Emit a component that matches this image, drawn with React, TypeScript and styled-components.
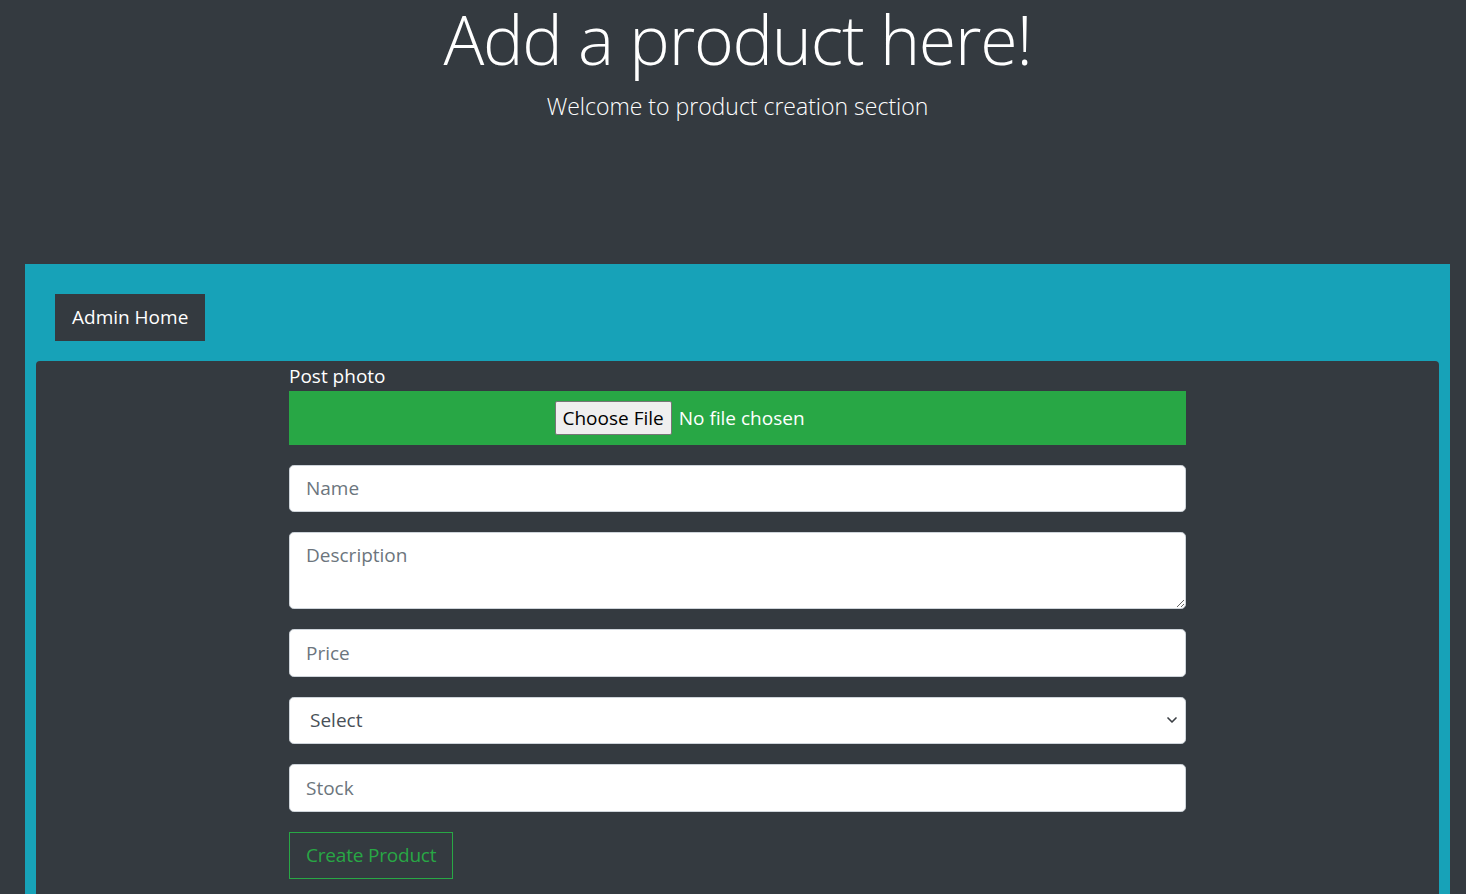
import React from "react";
import styled, { createGlobalStyle } from "styled-components";
import { ChevronDown } from "lucide-react";

const Global = createGlobalStyle`
  html, body { margin: 0; padding: 0; }
  body {
    background: #343a40;
    font-family: "Open Sans", "Noto Sans", sans-serif;
    color: #fff;
    overflow: hidden;
  }
  * { box-sizing: border-box; }
`;

const Header = styled.header`
  text-align: center;
  padding: 5px 0 140px 9px;
`;

const Title = styled.h1`
  margin: 0;
  font-size: 68px;
  font-weight: 300;
  line-height: 1;
  letter-spacing: -1.2px;
  color: #fff;
`;

const Subtitle = styled.p`
  margin: 16px 0 0;
  font-size: 23px;
  font-weight: 300;
  line-height: 1.5;
`;

const InfoSection = styled.section`
  background: #17a2b8;
  margin: 0 16px 0 25px;
  padding: 30px 11px 0;
`;

const ButtonRow = styled.div`
  padding: 0 19px 20px;
`;

const DarkButton = styled.button`
  display: block;
  font-family: inherit;
  font-size: 19px;
  line-height: 29px;
  padding: 8px 16px;
  background: #343a40;
  color: #fff;
  border: 1px solid #343a40;
  border-radius: 0;
`;

const Panel = styled.div`
  background: #343a40;
  border-radius: 4px 4px 0 0;
  padding: 0 0 60px;
`;

const Form = styled.form`
  width: 897px;
  margin: 0 auto;
  display: flex;
  flex-direction: column;
  gap: 20px;
`;

const Group = styled.div`
  display: flex;
  flex-direction: column;
`;

const Label = styled.label`
  font-size: 19px;
  line-height: 30px;
  color: #fff;
`;

const FileBox = styled.div`
  background: #28a745;
  height: 54px;
  display: flex;
  align-items: center;
  justify-content: center;
`;

const FileInner = styled.div`
  width: 366px;
  display: flex;
  align-items: center;
  gap: 7px;
`;

const FileButton = styled.span`
  display: inline-flex;
  align-items: center;
  height: 34px;
  padding: 0 7px;
  background: #efefef;
  border: 1px solid #767676;
  border-radius: 2px;
  color: #000;
  font-size: 19px;
`;

const FileText = styled.span`
  font-size: 19px;
  color: #fff;
`;

const fieldCss = `
  width: 100%;
  font-family: inherit;
  font-size: 19px;
  line-height: 1.5;
  padding: 8px 16px;
  color: #495057;
  background: #fff;
  border: 1px solid #ced4da;
  border-radius: 4.8px;
  outline: none;
  &::placeholder { color: #6c757d; opacity: 1; }
`;

const Input = styled.input`
  ${fieldCss}
  height: 47.5px;
`;

const TextArea = styled.textarea`
  ${fieldCss}
  height: 77px;
  display: block;
`;

const SelectWrap = styled.div`
  position: relative;
`;

const Select = styled.select`
  ${fieldCss}
  height: 47.5px;
  padding-left: 20px;
  appearance: none;
  -webkit-appearance: none;
`;

const SelectIcon = styled.span`
  position: absolute;
  right: 6px;
  top: 50%;
  transform: translateY(-50%);
  display: flex;
  color: #3b3f44;
  pointer-events: none;
`;

const SubmitRow = styled.div``;

const OutlineButton = styled.button`
  font-family: inherit;
  font-size: 19px;
  letter-spacing: -0.2px;
  line-height: 29px;
  padding: 8px 16px;
  background: transparent;
  color: #28a745;
  border: 1px solid #28a745;
  border-radius: 0;
`;

export default function App() {
  return (
    <>
      <Global />
      <Header>
        <Title>Add a product here!</Title>
        <Subtitle>Welcome to product creation section</Subtitle>
      </Header>
      <InfoSection>
        <ButtonRow>
          <DarkButton type="button">Admin Home</DarkButton>
        </ButtonRow>
        <Panel>
          <Form onSubmit={(e) => e.preventDefault()}>
            <Group>
              <Label>Post photo</Label>
              <FileBox>
                <FileInner>
                  <FileButton>Choose File</FileButton>
                  <FileText>No file chosen</FileText>
                </FileInner>
              </FileBox>
            </Group>
            <Input placeholder="Name" />
            <TextArea placeholder="Description" rows={2} />
            <Input placeholder="Price" />
            <SelectWrap>
              <Select defaultValue="">
                <option value="">Select</option>
              </Select>
              <SelectIcon>
                <ChevronDown size={16} strokeWidth={2.5} />
              </SelectIcon>
            </SelectWrap>
            <Input placeholder="Stock" />
            <SubmitRow>
              <OutlineButton type="submit">Create Product</OutlineButton>
            </SubmitRow>
          </Form>
        </Panel>
      </InfoSection>
    </>
  );
}
